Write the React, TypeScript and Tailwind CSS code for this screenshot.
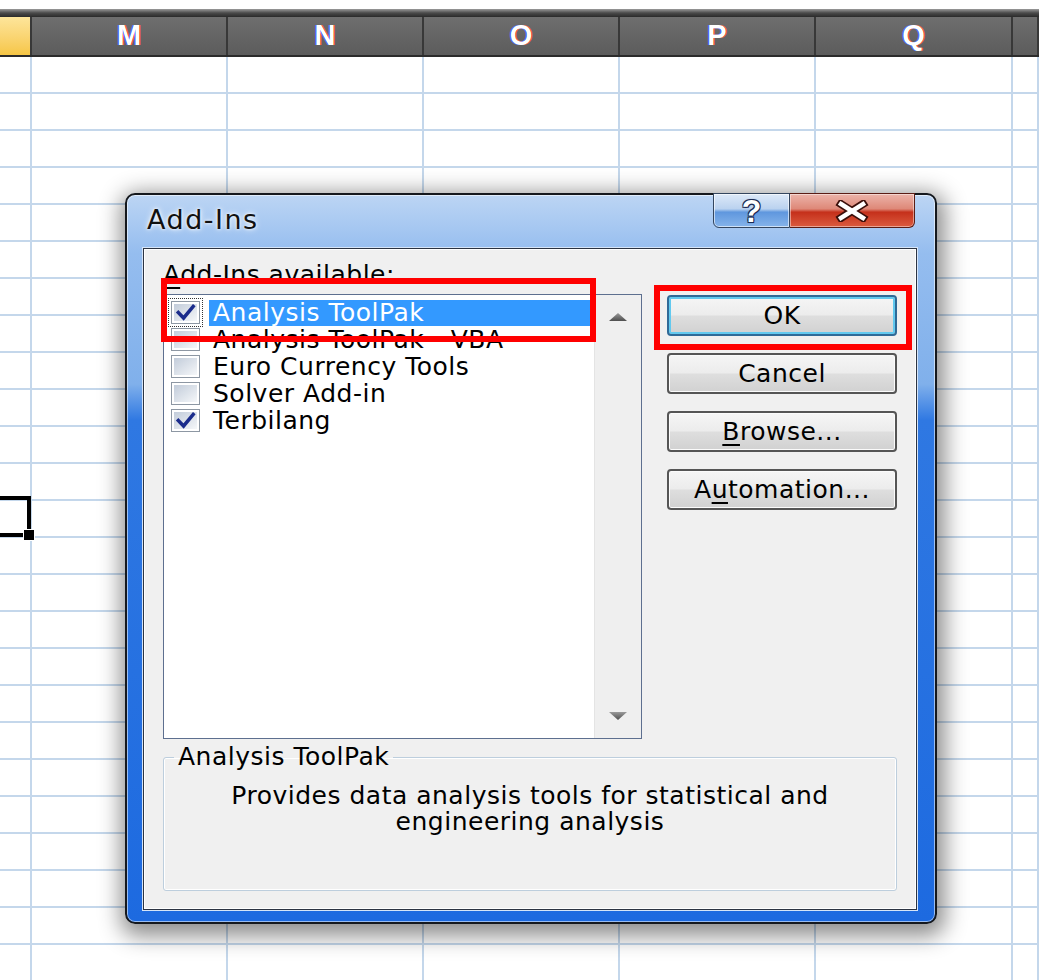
import React from 'react';

const columns = [
  { label: '', width: 'w-[32px]', selected: true },
  { label: 'M', width: 'w-[196px]' },
  { label: 'N', width: 'w-[196px]' },
  { label: 'O', width: 'w-[196px]' },
  { label: 'P', width: 'w-[196px]' },
  { label: 'Q', width: 'w-[197px]' },
  { label: '', width: 'flex-1' },
];

const addIns = [
  { name: 'Analysis ToolPak', checked: true, selected: true },
  { name: 'Analysis ToolPak - VBA', checked: false },
  { name: 'Euro Currency Tools', checked: false },
  { name: 'Solver Add-in', checked: false },
  { name: 'Terbilang', checked: true },
];

function Checkbox({ checked, focused }: { checked: boolean; focused?: boolean }) {
  return (
    <div
      className={`h-[23px] w-[29px] shrink-0 border border-[#8d97a3] bg-white p-[2px] ${
        focused ? 'outline-1 outline-dotted outline-[#333] outline-offset-[2px]' : ''
      }`}
    >
      <div className="relative h-full w-full bg-gradient-to-br from-[#c2ccda] to-[#f5f7f9]">
        {checked && (
          <svg viewBox="0 0 24 17" className="absolute inset-0 h-full w-full" preserveAspectRatio="none">
            <path d="M4.5 8.5 L10 14 L20 2.5" fill="none" stroke="#1b2c8c" strokeWidth="3.6" strokeLinecap="square" />
          </svg>
        )}
      </div>
    </div>
  );
}

function DialogButton({ children, isDefault }: { children: React.ReactNode; isDefault?: boolean }) {
  return (
    <button
      className={`h-[41px] w-full rounded-[4px] border-2 text-[25px] tracking-[0.5px] text-black bg-[linear-gradient(to_bottom,#f5f5f5_0%,#ececec_48%,#dedede_52%,#d1d1d1_100%)] ${
        isDefault
          ? 'border-[#2f6a97] shadow-[inset_0_0_0_2px_#62c9ef]'
          : 'border-[#555555] shadow-[inset_0_0_0_1px_#fbfbfb]'
      }`}
    >
      {children}
    </button>
  );
}

function ScrollArrow({ up }: { up?: boolean }) {
  return (
    <svg width="18" height="8" viewBox="0 0 18 8">
      <defs>
        <linearGradient id={up ? 'arrUp' : 'arrDown'} x1="0" y1="0" x2="0" y2="1">
          <stop offset="0" stopColor="#9a9a9a" />
          <stop offset="1" stopColor="#4e4e4e" />
        </linearGradient>
      </defs>
      <polygon points={up ? '0,8 9,0 18,8' : '0,0 18,0 9,8'} fill={`url(#${up ? 'arrUp' : 'arrDown'})`} />
    </svg>
  );
}

export default function App() {
  const rows = Array.from({ length: 25 });

  return (
    <div className="relative h-[980px] w-[1039px] overflow-hidden bg-white font-['Liberation_Sans',sans-serif]">
      {/* spreadsheet top */}
      <div className="h-[9px] bg-white" />
      <div className="h-[8px] bg-gradient-to-b from-[#9c9c9c] via-[#4a4a4a] to-[#2a2a2a]" />
      <div className="flex h-[40px] border-b-2 border-[#2b2b2b]">
        {columns.map((c, i) => (
          <div
            key={i}
            className={`${c.width} flex items-center justify-center border-r-2 border-[#383838] ${
              c.selected
                ? 'bg-gradient-to-b from-[#fde59a] to-[#f6c645]'
                : 'bg-gradient-to-b from-[#6e6e6e] to-[#5c5c5c]'
            }`}
          >
            <span className="text-[29px] font-bold text-white [text-shadow:-1px_0_#3f5fff,1px_0_#ff4a2a]">
              {c.label}
            </span>
          </div>
        ))}
      </div>
      <div>
        {rows.map((_, r) => (
          <div key={r} className="flex h-[37px] border-b-2 border-[#c4d7eb]">
            {columns.map((c, i) => (
              <div key={i} className={`${c.width} border-r-2 border-[#c4d7eb]`} />
            ))}
          </div>
        ))}
      </div>

      {/* active cell border peeking from the left */}
      <div className="absolute left-0 top-[496px] h-[41px] w-[31px] border-y-[4px] border-r-[4px] border-black" />
      <div className="absolute left-[23px] top-[529px] h-[12px] w-[12px] border border-white bg-black" />

      {/* Add-Ins dialog */}
      <div className="absolute left-[125px] top-[193px] flex h-[731px] w-[812px] flex-col rounded-[10px] border-2 border-[#15181d] bg-[linear-gradient(to_bottom,#bcd5f4_0%,#95bdef_8%,#80b0eb_26%,#2f78e2_31%,#1d6ae0_100%)] pb-[12px] pl-[16px] pr-[18px] shadow-[2px_6px_22px_6px_rgba(0,0,0,0.45),inset_0_0_0_1px_rgba(255,255,255,0.55)] font-['DejaVu_Sans',sans-serif]">
        <div className="h-[53px] pl-[4px] pt-[9px]">
          <span className="text-[27px] leading-[32px] tracking-[1.5px] text-[#111] [text-shadow:0_0_6px_#fff,0_0_3px_#fff]">
            Add-Ins
          </span>
        </div>

        <div className="absolute right-[20px] top-[-2px] flex h-[35px]">
          <div className="flex w-[77px] items-center justify-center rounded-bl-[6px] border border-[#34465f] bg-[linear-gradient(to_bottom,#dde9f8_0%,#bad2ef_45%,#5f97de_55%,#86b4ea_100%)] shadow-[inset_0_0_0_1px_rgba(255,255,255,0.6)]">
            <span className="font-['Liberation_Sans',sans-serif] text-[32px] font-bold leading-none text-white [text-shadow:0_0_2px_#1b2b55,1px_1px_0_#1b2b55,-1px_-1px_0_#1b2b55,1px_-1px_0_#1b2b55,-1px_1px_0_#1b2b55]">
              ?
            </span>
          </div>
          <div className="flex w-[125px] items-center justify-center rounded-br-[6px] border border-l-0 border-[#5b1d15] bg-[linear-gradient(to_bottom,#ecb4aa_0%,#de8878_45%,#c5301b_55%,#db5b3e_100%)] shadow-[inset_0_0_0_1px_rgba(255,255,255,0.45)]">
            <svg width="40" height="22" viewBox="0 0 40 22">
              <path d="M9 4 L31 18 M31 4 L9 18" stroke="#3b0f0a" strokeWidth="8" strokeLinecap="square" />
              <path d="M9 4 L31 18 M31 4 L9 18" stroke="#fff" strokeWidth="4.5" strokeLinecap="square" />
            </svg>
          </div>
        </div>

        {/* client area */}
        <div className="flex h-[662px] flex-col border border-[#2c3442] bg-[#f0f0f0] px-[19px] pt-[12px] text-[25px] tracking-[0.5px] text-black shadow-[0_0_0_1px_#d6e5f8,inset_0_0_0_1px_#ffffff]">
          <div className="flex gap-[25px]">
            <div className="w-[479px]">
              <div className="h-[28px] leading-[28px]">
                <span className="underline underline-offset-[4px]">A</span>dd-Ins available:
              </div>
              <div className="mt-[5px] flex h-[445px] border border-[#5d6f8f] bg-white">
                <div className="flex-1 pt-[4px]">
                  {addIns.map((item) => (
                    <div key={item.name} className="flex h-[27px] items-center pl-[7px]">
                      <Checkbox checked={item.checked} focused={item.selected} />
                      <span
                        className={`ml-[9px] h-[26px] whitespace-nowrap pl-[4px] leading-[26px] ${
                          item.selected ? 'flex-1 bg-[#3399ff] text-white' : ''
                        }`}
                      >
                        {item.name}
                      </span>
                    </div>
                  ))}
                </div>
                <div className="flex w-[47px] flex-col items-center justify-between border-l border-[#e4e4e4] bg-[#efefef] py-[18px]">
                  <ScrollArrow up />
                  <ScrollArrow />
                </div>
              </div>
            </div>
            <div className="flex w-[230px] flex-col gap-[17px] pt-[34px]">
              <DialogButton isDefault>OK</DialogButton>
              <DialogButton>Cancel</DialogButton>
              <DialogButton>
                <span className="underline underline-offset-[4px]">B</span>rowse...
              </DialogButton>
              <DialogButton>
                A<span className="underline underline-offset-[4px]">u</span>tomation...
              </DialogButton>
            </div>
          </div>

          <fieldset className="mt-[5px] h-[147px] min-w-0 rounded-[3px] border border-[#bdcedd] px-[10px] shadow-[inset_0_0_0_1px_#fff]">
            <legend className="px-[4px] leading-[26px]">Analysis ToolPak</legend>
            <p className="mt-[13px] text-center leading-[26px]">
              Provides data analysis tools for statistical and
              <br />
              engineering analysis
            </p>
          </fieldset>
        </div>
      </div>

      {/* red highlight annotations */}
      <div className="absolute left-[161px] top-[278px] h-[64px] w-[435px] border-[6px] border-[#ff0000]" />
      <div className="absolute left-[654px] top-[285px] h-[65px] w-[258px] border-[6px] border-[#ff0000]" />
    </div>
  );
}
